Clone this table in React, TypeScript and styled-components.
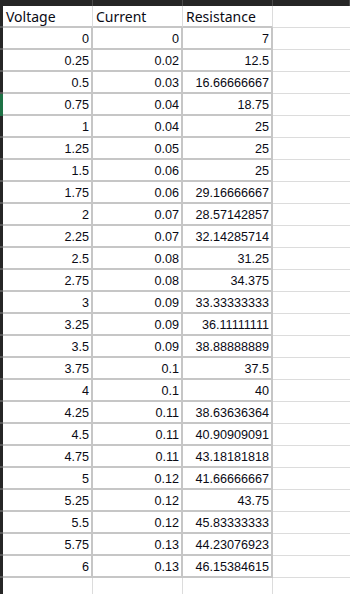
import styled, { createGlobalStyle } from "styled-components";

const GlobalStyle = createGlobalStyle`
  html, body {
    margin: 0;
    padding: 0;
    background: #ffffff;
    overflow: hidden;
  }
`;

const COLS = "3px 90px 90px 90px 1fr";

const Sheet = styled.div`
  width: 350px;
  height: 594px;
  overflow: hidden;
  background: #fff;
  display: flex;
  flex-direction: column;
`;

const ColumnHeader = styled.div`
  display: grid;
  grid-template-columns: ${COLS};
  height: 6px;
  flex: none;
  background: #262626;
  overflow: hidden;
`;

const ColumnEdge = styled.div`
  height: 6px;
  border-right: 1px solid #4a4a4a;
`;

const Row = styled.div`
  display: grid;
  grid-template-columns: ${COLS};
  height: 22px;
  flex: none;
`;

const RowHead = styled.div<{ $selected?: boolean }>`
  background: ${(p) => (p.$selected ? "#1e7145" : "#262626")};
  border-bottom: 2px solid ${(p) => (p.$selected ? "#1e7145" : "#555")};
  box-sizing: border-box;
`;

const TitleCell = styled.div`
  box-sizing: border-box;
  padding: 0 0 0 3px;
  display: flex;
  align-items: center;
  border-right: 1px solid #dcdcdc;
  border-bottom: 2px solid #c6c6c6;
  font-family: "Noto Sans", sans-serif;
  font-size: 14px;
  color: #0a0a14;
  white-space: nowrap;
  overflow: hidden;
`;

const NumCell = styled.div`
  box-sizing: border-box;
  padding: 1px 2px 0 0;
  display: flex;
  align-items: center;
  justify-content: flex-end;
  border-right: 2px solid #c6c6c6;
  border-bottom: 2px solid #c6c6c6;
  font-family: "Liberation Sans", Arial, sans-serif;
  font-size: 12.6px;
  color: #0a0a14;
  white-space: nowrap;
  overflow: hidden;
`;

const BlankCell = styled.div<{ $wide?: boolean }>`
  box-sizing: border-box;
  border-right: ${(p) => (p.$wide ? "none" : "1px solid #dcdcdc")};
  border-bottom: 1px solid #dcdcdc;
`;

const current = [
  0, 0.02, 0.03, 0.04, 0.04, 0.05, 0.06, 0.06, 0.07, 0.07, 0.08, 0.08, 0.09,
  0.09, 0.09, 0.1, 0.1, 0.11, 0.11, 0.11, 0.12, 0.12, 0.12, 0.13, 0.13,
];

const resistance = [
  "7", "12.5", "16.66666667", "18.75", "25", "25", "25", "29.16666667",
  "28.57142857", "32.14285714", "31.25", "34.375", "33.33333333", "36.11111111",
  "38.88888889", "37.5", "40", "38.63636364", "40.90909091", "43.18181818",
  "41.66666667", "43.75", "45.83333333", "44.23076923", "46.15384615",
];

const rows = current.map((c, i) => ({
  voltage: String(i * 0.25),
  current: String(c),
  resistance: resistance[i],
}));

export default function App() {
  return (
    <>
      <GlobalStyle />
      <Sheet>
        <ColumnHeader>
          <div />
          <ColumnEdge />
          <ColumnEdge />
          <ColumnEdge />
          <ColumnEdge />
        </ColumnHeader>

        <Row>
          <RowHead />
          <TitleCell>Voltage</TitleCell>
          <TitleCell>Current</TitleCell>
          <TitleCell>Resistance</TitleCell>
          <BlankCell $wide />
        </Row>

        {rows.map((r, i) => (
          <Row key={i}>
            <RowHead $selected={r.voltage === "0.75"} />
            <NumCell>{r.voltage}</NumCell>
            <NumCell>{r.current}</NumCell>
            <NumCell>{r.resistance}</NumCell>
            <BlankCell $wide />
          </Row>
        ))}

        <Row>
          <RowHead />
          <BlankCell />
          <BlankCell />
          <BlankCell />
          <BlankCell $wide />
        </Row>
      </Sheet>
    </>
  );
}
